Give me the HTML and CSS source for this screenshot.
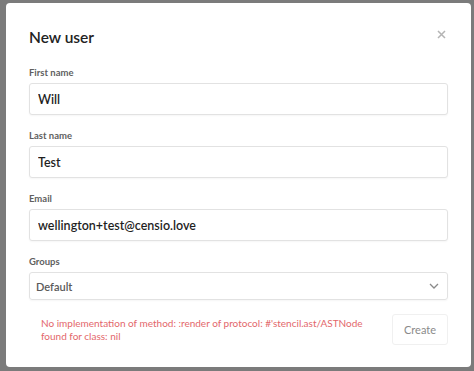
FILE: index.html
```html
<!DOCTYPE html>
<html lang="en">

<head>
    <meta charset="UTF-8">
    <meta name="viewport" content="width=device-width, initial-scale=1.0">
    <title>New user</title>
    <link rel="stylesheet" href="styles.css">
</head>

<body>
    <!-- Modal -->
    <div class="modal">
        <div class="modal-header">
            <h2>New user</h2>
            <button class="close" aria-label="Close">
                <svg width="9" height="9" viewBox="0 0 9 9">
                    <path d="M1 1L8 8M8 1L1 8" stroke="#b4b4b4" stroke-width="1.5" fill="none" />
                </svg>
            </button>
        </div>

        <form class="form">
            <div class="field">
                <label>First name</label>
                <input type="text" value="Will">
            </div>
            <div class="field">
                <label>Last name</label>
                <input type="text" value="Test">
            </div>
            <div class="field">
                <label>Email</label>
                <input type="text" value="wellington+test@censio.love">
            </div>
            <div class="field">
                <label>Groups</label>
                <div class="select">
                    <span>Default</span>
                    <svg width="10" height="6" viewBox="0 0 10 6">
                        <path d="M1 1L5 5L9 1" stroke="#8a8a8a" stroke-width="1.3" fill="none" />
                    </svg>
                </div>
            </div>

            <!-- Footer -->
            <div class="footer">
                <p class="error">No implementation of method: :render of protocol: #'stencil.ast/ASTNode found for class: nil</p>
                <button type="button" class="btn">Create</button>
            </div>
        </form>
    </div>
</body>

</html>
```

FILE: styles.css
```css
html,
body {
    margin: 0;
    padding: 0;
    height: 100%;
}

body {
    font-family: 'Lato', 'Liberation Sans', sans-serif;
    background: #7b7b7b;
    padding: 3px 3px 4px 6px;
    box-sizing: border-box;
}

/* Modal */
.modal {
    background: white;
    border-radius: 4px;
    height: 364px;
    box-sizing: border-box;
    padding: 22px 23px 0 23px;
}

.modal-header {
    display: flex;
    justify-content: space-between;
    align-items: flex-start;
}

.modal-header h2 {
    margin: 0;
    font-size: 15.5px;
    font-weight: 600;
    line-height: 24px;
    color: #222;
}

.close {
    background: none;
    border: none;
    padding: 0;
    margin: 5px 2px 0 0;
    line-height: 0;
}

/* Form */
.form {
    margin-top: 17px;
}

.field {
    margin-bottom: 14px;
}

.field label {
    display: block;
    font-size: 9.5px;
    font-weight: 700;
    color: #5f5f5f;
    line-height: 14px;
    margin-bottom: 3px;
}

.field input {
    display: block;
    width: 100%;
    box-sizing: border-box;
    height: 32px;
    border: 1px solid #e2e2e2;
    border-radius: 3px;
    padding: 0 8px;
    font-family: inherit;
    font-size: 12.5px;
    font-weight: 600;
    color: #1f1f1f;
    box-shadow: 0 1px 2px rgba(0, 0, 0, 0.04);
}

.select {
    display: flex;
    justify-content: space-between;
    align-items: center;
    height: 26px;
    border: 1px solid #e2e2e2;
    border-radius: 3px;
    padding: 0 8px 0 6px;
    font-size: 11px;
    font-weight: 600;
    color: #5a5a5a;
    box-shadow: 0 1px 2px rgba(0, 0, 0, 0.04);
}

/* Footer */
.footer {
    display: flex;
    justify-content: space-between;
    align-items: center;
    margin-top: 13px;
}

.error {
    margin: 0 0 0 12px;
    width: 340px;
    font-size: 10px;
    line-height: 13px;
    color: #e3676b;
}

.btn {
    width: 56px;
    height: 31px;
    background: white;
    border: 1px solid #f0f0f0;
    border-radius: 3px;
    font-family: inherit;
    font-size: 11px;
    color: #8a8a8a;
}
```
